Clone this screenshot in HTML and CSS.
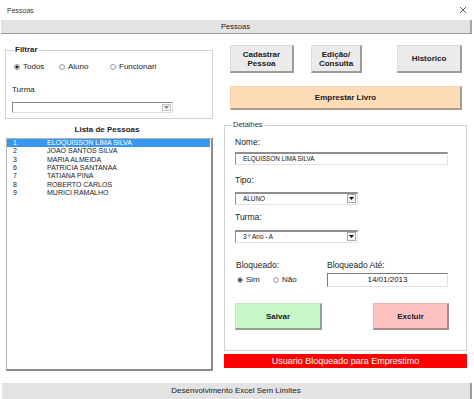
FILE: index.html
```html
<!DOCTYPE html>
<html lang="pt">
<head>
<meta charset="utf-8">
<title>Pessoas</title>
<link rel="stylesheet" href="styles.css">
</head>
<body>
<div class="titlebar">
  <span class="title">Pessoas</span>
  <svg class="close" width="8" height="8" viewBox="0 0 8 8"><path d="M1 1L7 7M7 1L1 7" stroke="#555" stroke-width="0.9" fill="none"/></svg>
</div>
<div class="headerbar">Pessoas</div>
<div class="main">
  <div class="left">
    <fieldset class="group filtrar">
      <legend class="legend-bold">Filtrar</legend>
      <div class="radios">
        <span class="radio"><span class="dot on"></span>Todos</span>
        <span class="radio"><span class="dot"></span>Aluno</span>
        <span class="radio"><span class="dot"></span>Funcionari</span>
      </div>
      <div class="flabel">Turma</div>
      <div class="combo">
        <span class="ddbtn light"><svg width="5" height="3" viewBox="0 0 5 3"><path d="M0 0H5L2.5 3Z" fill="#888"/></svg></span>
      </div>
    </fieldset>
    <div class="list-title">Lista de Pessoas</div>
    <div class="listbox">
      <div class="row selected"><span>1</span><span>ELOQUISSON LIMA SILVA</span></div>
      <div class="row"><span>2</span><span>JOAO SANTOS SILVA</span></div>
      <div class="row"><span>3</span><span>MARIA ALMEIDA</span></div>
      <div class="row"><span>6</span><span>PATRICIA SANTANAA</span></div>
      <div class="row"><span>7</span><span>TATIANA PINA</span></div>
      <div class="row"><span>8</span><span>ROBERTO CARLOS</span></div>
      <div class="row"><span>9</span><span>MURICI RAMALHO</span></div>
    </div>
  </div>
  <div class="right">
    <div class="btnrow">
      <div class="btn b-cad">Cadastrar<br>Pessoa</div>
      <div class="btn b-edi">Edição/<br>Consulta</div>
      <div class="btn b-his">Historico</div>
    </div>
    <div class="btn emprestar">Emprestar Livro</div>
    <fieldset class="group detalhes">
      <legend class="legend-reg">Detalhes</legend>
      <div class="lbl m8">Nome:</div>
      <div class="input m5">ELQUISSON LIMA SILVA</div>
      <div class="lbl m10">Tipo:</div>
      <div class="select m7"><span class="seltext">ALUNO</span><span class="ddbtn"><svg width="5" height="3" viewBox="0 0 5 3"><path d="M0 0H5L2.5 3Z" fill="#111"/></svg></span></div>
      <div class="lbl m7">Turma:</div>
      <div class="select m8"><span class="seltext">3 º Ano - A</span><span class="ddbtn"><svg width="5" height="3" viewBox="0 0 5 3"><path d="M0 0H5L2.5 3Z" fill="#111"/></svg></span></div>
      <div class="bloq">
        <div class="lbl">Bloqueado:</div>
        <div class="lbl">Bloqueado Até:</div>
        <div class="bradios">
          <span class="radio r-sim"><span class="dot on"></span>Sim</span>
          <span class="radio"><span class="dot"></span>Não</span>
        </div>
        <div class="datebox">14/01/2013</div>
      </div>
      <div class="actions">
        <div class="btn salvar">Salvar</div>
        <div class="btn excluir">Excluir</div>
      </div>
    </fieldset>
    <div class="alert">Usuario Bloqueado para Emprestimo</div>
  </div>
</div>
<div class="footer">Desenvolvimento Excel Sem Limites</div>
</body>
</html>
```

FILE: styles.css
```css
* { box-sizing: border-box; }

body {
  margin: 0;
  width: 474px;
  height: 399px;
  overflow: hidden;
  background: #ffffff;
  font-family: "Liberation Sans", Arial, sans-serif;
  color: #1c1c1c;
}

.titlebar {
  height: 20px;
  display: flex;
  align-items: center;
  justify-content: space-between;
  padding: 0 7px 0 7px;
  font-size: 7px;
  color: #333;
}

.headerbar {
  height: 14px;
  margin: 0 2px 0 1px;
  background: #e3e3e3;
  border-bottom: 1px solid #9a9a9a;
  border-right: 2px solid #a6a6a6;
  font-size: 7.5px;
  display: flex;
  align-items: center;
  justify-content: center;
  color: #222;
}

.main {
  height: 349px;
  display: grid;
  grid-template-columns: 208px 243px;
  column-gap: 11px;
  padding-left: 5px;
}

.left {
  padding-top: 12px;
  display: flex;
  flex-direction: column;
}

.group {
  margin: 0;
  min-width: 0;
  border: 1px solid #d2d2d2;
}

.filtrar {
  height: 73px;
  padding: 0 6px;
}

.legend-bold {
  font-size: 8px;
  font-weight: bold;
  line-height: 8px;
  padding: 0 1px;
  margin-left: 2px;
}

.legend-reg {
  font-size: 7.5px;
  line-height: 8px;
  padding: 0 1px;
  margin-left: -3px;
  color: #333;
}

.radios {
  display: grid;
  grid-template-columns: 45px 51px auto;
  height: 10px;
  margin-top: 8px;
  padding-left: 2px;
  font-size: 8px;
  align-items: center;
}

.radio {
  display: flex;
  align-items: center;
  gap: 3px;
  font-size: 8px;
  line-height: 10px;
}

.dot {
  width: 6px;
  height: 6px;
  border-radius: 50%;
  border: 1px solid #9a9a9a;
  background: #fff;
  flex: none;
}

.dot.on {
  background: radial-gradient(circle, #222 0 1.3px, #fff 1.8px);
}

.flabel {
  margin-top: 13px;
  font-size: 8px;
  line-height: 10px;
  height: 10px;
}

.combo {
  margin-top: 7px;
  width: 161px;
  height: 11px;
  border: 1px solid #dcdcdc;
  border-top: 1px solid #8a8a8a;
  border-left: 1px solid #8a8a8a;
  display: flex;
  justify-content: flex-end;
  align-items: stretch;
  padding: 1px;
}

.ddbtn {
  width: 9px;
  border: 1px solid #a8a8a8;
  background: #f4f4f4;
  display: flex;
  align-items: center;
  justify-content: center;
}

.ddbtn.light {
  border-color: #c4c4c4;
}

.list-title {
  margin-top: 6px;
  padding-right: 4px;
  font-size: 8px;
  font-weight: bold;
  line-height: 10px;
  text-align: center;
}

.listbox {
  margin-top: 3px;
  margin-left: 1px;
  height: 233px;
  border: 1px solid #b4b4b4;
  border-right: 2px solid #8c8c8c;
  border-bottom: 2px solid #8c8c8c;
  font-size: 7px;
  color: #222;
}

.row {
  display: grid;
  grid-template-columns: 34px auto;
  height: 8.33px;
  line-height: 8.33px;
  padding-left: 6px;
  margin-right: 1px;
}

.row.selected {
  background: #3898f0;
  color: #ffffff;
}

.right {
  padding-top: 11px;
  display: flex;
  flex-direction: column;
}

.btnrow {
  display: flex;
  height: 28px;
  padding-left: 6px;
}

.btn {
  display: flex;
  align-items: center;
  justify-content: center;
  text-align: center;
  font-size: 8px;
  font-weight: bold;
  line-height: 9px;
  background: #ebebeb;
  border: 1px solid #dcdcdc;
  border-right: 2px solid #9c9c9c;
  border-bottom: 2px solid #9c9c9c;
  color: #1a1a1a;
}

.b-cad { width: 64px; margin-right: 17px; }
.b-edi { width: 51px; margin-right: 35px; }
.b-his { width: 65px; }

.emprestar {
  margin: 13px 5px 0 6px;
  height: 24px;
  background: #fedcb8;
  border-color: #f3d2ae;
  border-right-color: #a89a8c;
  border-bottom-color: #a89a8c;
}

.detalhes {
  margin-top: 11px;
  height: 230px;
  padding: 0 10px;
}

.lbl {
  font-size: 8.5px;
  line-height: 10px;
  height: 10px;
  color: #222;
}

.m5 { margin-top: 5px; }
.m7 { margin-top: 7px; }
.m8 { margin-top: 8px; }
.m10 { margin-top: 10px; }

.input {
  width: 213px;
  height: 13px;
  border: 1px solid #e2e2e2;
  border-top: 2px solid #8e8e8e;
  border-left: 1px solid #8e8e8e;
  padding-left: 7px;
  font-size: 6.3px;
  line-height: 10px;
  color: #111;
}

.select {
  width: 123px;
  height: 13px;
  border: 1px solid #e2e2e2;
  border-top: 2px solid #8e8e8e;
  border-left: 1px solid #8e8e8e;
  display: flex;
  justify-content: space-between;
  padding: 0 1px 1px 7px;
}

.seltext {
  font-size: 6.4px;
  line-height: 10px;
  color: #111;
}

.bloq {
  margin-top: 17px;
  display: grid;
  grid-template-columns: 91px 121px;
  grid-template-rows: 10px 14px;
  row-gap: 3px;
  padding-left: 1px;
}

.bradios {
  display: flex;
  align-items: center;
  padding-left: 1px;
}

.r-sim { width: 36px; }

.datebox {
  height: 14px;
  border: 1px solid #e0e0e0;
  border-top: 1px solid #7a7a7a;
  border-left: 1px solid #7a7a7a;
  font-size: 8px;
  line-height: 12px;
  text-align: center;
  color: #111;
}

.actions {
  margin-top: 16px;
  width: 214px;
  height: 27px;
  display: flex;
  justify-content: space-between;
}

.salvar {
  width: 87px;
  background: #c8f7c8;
  border-color: #bde9bd;
  border-right-color: #8fa58f;
  border-bottom-color: #8fa58f;
}

.excluir {
  width: 76px;
  background: #ffc2c2;
  border-color: #f0b6b6;
  border-right-color: #a88c8c;
  border-bottom-color: #a88c8c;
}

.alert {
  margin-top: 3px;
  height: 14px;
  background: #ff0000;
  color: #ffffff;
  font-size: 9px;
  line-height: 14px;
  text-align: center;
}

.footer {
  height: 16px;
  margin: 0 2px 0 2px;
  background: #e3e3e3;
  border-right: 2px solid #9a9a9a;
  font-size: 8px;
  line-height: 16px;
  text-align: center;
  color: #222;
}
```
